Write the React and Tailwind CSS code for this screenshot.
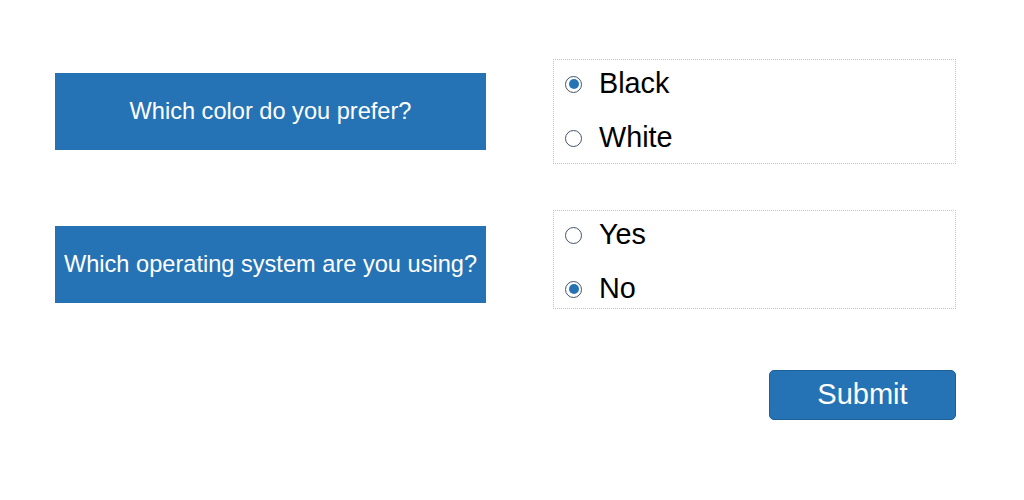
import { useState } from 'react';

const questions = [
  { id: 'color', label: 'Which color do you prefer?', options: ['Black', 'White'], initial: 'Black', box: 'h-[105px]', labelOffset: 'mt-[14px]' },
  { id: 'os', label: 'Which operating system are you using?', options: ['Yes', 'No'], initial: 'No', box: 'h-[99px]', labelOffset: 'mt-[16px]' },
];

function Radio({ checked }) {
  return (
    <span className="flex h-[17px] w-[17px] items-center justify-center rounded-full border-[1.5px] border-[#44546a] bg-white">
      {checked && <span className="h-[10px] w-[10px] rounded-full bg-[#2573b5]" />}
    </span>
  );
}

export default function App() {
  const [answers, setAnswers] = useState(
    Object.fromEntries(questions.map((q) => [q.id, q.initial]))
  );

  return (
    <div
      className="h-[500px] w-[1024px] bg-white pl-[55px] pt-[59px]"
      style={{ fontFamily: '"Liberation Sans", Arial, sans-serif' }}
    >
      <div className="flex flex-col gap-[46px]">
        {questions.map((q) => (
          <div key={q.id} className="flex items-start gap-[67px]">
            <div
              className={`flex h-[77px] w-[431px] items-center justify-center bg-[#2573b5] text-[23.6px] text-white ${q.labelOffset}`}
            >
              {q.label}
            </div>
            <div className={`flex w-[403px] flex-col gap-[6px] border border-dotted border-[#c4c4c4] ${q.box}`}>
              {q.options.map((opt) => (
                <label
                  key={opt}
                  className="flex h-[48px] shrink-0 cursor-pointer items-center gap-[17px] pl-[11px] text-[28.8px] text-black"
                  onClick={() => setAnswers((a) => ({ ...a, [q.id]: opt }))}
                >
                  <Radio checked={answers[q.id] === opt} />
                  <span>{opt}</span>
                </label>
              ))}
            </div>
          </div>
        ))}
      </div>

      <div className="flex w-[901px] justify-end pt-[61px]">
        <button
          type="button"
          className="h-[50px] w-[187px] rounded-[5px] border border-[#1d5f97] bg-[#2573b5] text-[29px] text-white"
        >
          Submit
        </button>
      </div>
    </div>
  );
}
